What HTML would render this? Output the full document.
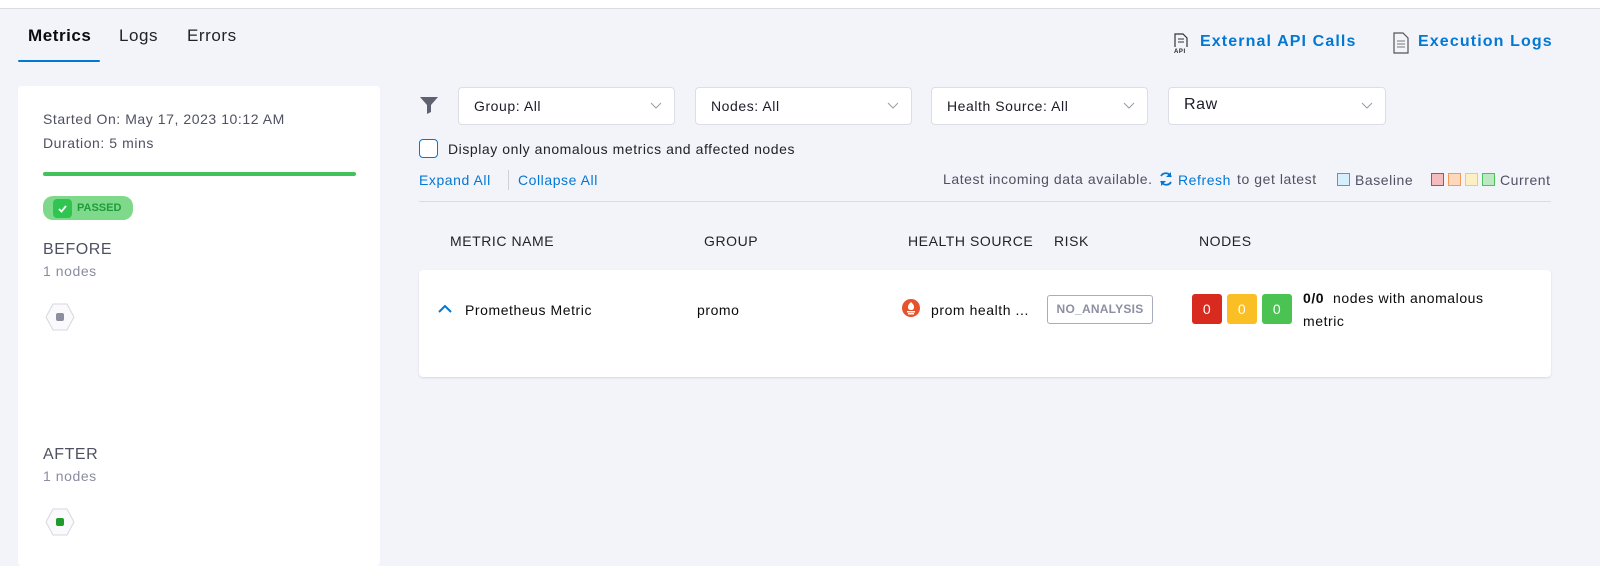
<!DOCTYPE html>
<html><head><meta charset="utf-8"><style>
*{box-sizing:border-box;margin:0;padding:0}
body{width:1600px;height:565px;background:#f3f4f9;font-family:"Liberation Sans",sans-serif;position:relative;overflow:hidden;color:#22222a;letter-spacing:.035em}
.a{position:absolute;white-space:nowrap}
.sel{position:absolute;top:87px;height:38px;background:#fff;border:1px solid #dcdde6;border-radius:4px;font-size:14px;padding:10px 15px;color:#1c1c28}
.sel svg{position:absolute;right:12px;top:14px}
.blue{color:#0278d5}
.hex{position:absolute;width:30px;height:28px}
</style></head><body>
<div class="a" style="left:0;top:0;width:1600px;height:9px;background:#fff;border-bottom:1px solid #dadce6"></div>
<div class="a" style="left:28px;top:26px;font-size:17px;font-weight:bold;color:#0b0b0d">Metrics</div>
<div class="a" style="left:119px;top:26px;font-size:17px;color:#22222a">Logs</div>
<div class="a" style="left:187px;top:26px;font-size:17px;color:#22222a">Errors</div>
<div class="a" style="left:18px;top:60px;width:82px;height:2px;background:#0278d5;border-radius:1px"></div>

<svg class="a" style="left:1173px;top:32px" width="18" height="22" viewBox="0 0 18 22"><path d="M2 15V2h8l4 4v9" fill="none" stroke="#333" stroke-width="1.2"/><path d="M5 7h6M5 10h6" stroke="#333" stroke-width="1"/><text x="1" y="21" font-size="6" font-weight="bold" font-family="Liberation Sans" fill="#222">API</text></svg>
<div class="a blue" style="left:1200px;top:33px;font-size:16px;font-weight:bold;letter-spacing:.07em">External API Calls</div>
<svg class="a" style="left:1392px;top:32px" width="18" height="22" viewBox="0 0 18 22"><path d="M2 1h9l5 5v15H2z" fill="none" stroke="#555" stroke-width="1.2"/><path d="M5 9h8M5 12h8M5 15h8" stroke="#777" stroke-width="1"/></svg>
<div class="a blue" style="left:1418px;top:33px;font-size:16px;font-weight:bold;letter-spacing:.07em">Execution Logs</div>

<div class="a" style="left:18px;top:86px;width:362px;height:480px;background:#fff;border-radius:4px"></div>
<div class="a" style="left:43px;top:111px;font-size:14px;color:#4f5162">Started On: May 17, 2023 10:12 AM</div>
<div class="a" style="left:43px;top:135px;font-size:14px;color:#4f5162">Duration: 5 mins</div>
<div class="a" style="left:43px;top:172px;width:313px;height:4px;background:#42c25a;border-radius:2px"></div>
<div class="a" style="left:43px;top:196px;width:90px;height:24px;background:#7ed98a;border-radius:10px"></div>
<div class="a" style="left:53px;top:199px;width:19px;height:19px;background:#30c550;border-radius:4px"></div>
<svg class="a" style="left:57px;top:203px" width="11" height="11"><path d="M2 6l2.5 2.5L9 3" stroke="#fff" stroke-width="1.8" fill="none"/></svg>
<div class="a" style="left:77px;top:202px;font-size:11px;font-weight:bold;color:#1f9b3a;letter-spacing:0">PASSED</div>
<div class="a" style="left:43px;top:241px;font-size:16px;color:#4f5162">BEFORE</div>
<div class="a" style="left:43px;top:263px;font-size:14px;color:#8a8ca0">1 nodes</div>
<svg class="hex" style="left:45px;top:303px" width="30" height="28"><polygon points="8,1 22,1 29,14 22,27 8,27 1,14" fill="#fafafc" stroke="#d6d7e0"/><rect x="11" y="10" width="8" height="8" rx="2" fill="#8d8e9e"/></svg>
<div class="a" style="left:43px;top:446px;font-size:16px;color:#4f5162">AFTER</div>
<div class="a" style="left:43px;top:468px;font-size:14px;color:#8a8ca0">1 nodes</div>
<svg class="hex" style="left:45px;top:508px" width="30" height="28"><polygon points="8,1 22,1 29,14 22,27 8,27 1,14" fill="#fafafc" stroke="#d6d7e0"/><rect x="11" y="10" width="8" height="8" rx="2" fill="#1f9b2a"/></svg>

<svg class="a" style="left:419px;top:96px" width="20" height="18"><path d="M1 1h18l-7 8v7l-4 2V9z" fill="#5f6070"/></svg>
<div class="sel" style="left:458px;width:217px">Group: All<svg width="12" height="8"><path d="M1 1l5 5 5-5" stroke="#9a9caa" fill="none"/></svg></div>
<div class="sel" style="left:695px;width:217px">Nodes: All<svg width="12" height="8"><path d="M1 1l5 5 5-5" stroke="#9a9caa" fill="none"/></svg></div>
<div class="sel" style="left:931px;width:217px">Health Source: All<svg width="12" height="8"><path d="M1 1l5 5 5-5" stroke="#9a9caa" fill="none"/></svg></div>
<div class="sel" style="left:1168px;width:218px;font-size:16px;padding-top:8px">Raw<svg width="12" height="8"><path d="M1 1l5 5 5-5" stroke="#9a9caa" fill="none"/></svg></div>

<div class="a" style="left:419px;top:139px;width:19px;height:19px;border:1.5px solid #0278d5;border-radius:4px;background:#fff"></div>
<div class="a" style="left:448px;top:141px;font-size:14px;color:#22222a">Display only anomalous metrics and affected nodes</div>
<div class="a blue" style="left:419px;top:172px;font-size:14px">Expand All</div>
<div class="a" style="left:508px;top:170px;width:1px;height:20px;background:#cfd0da"></div>
<div class="a blue" style="left:518px;top:172px;font-size:14px">Collapse All</div>

<div class="a" style="left:943px;top:171px;font-size:14px;color:#4f5162">Latest incoming data available.</div>
<svg class="a" style="left:1158px;top:171px" width="16" height="16" viewBox="0 0 16 16"><path d="M13 6A5.5 5.5 0 0 0 3 5M3 10a5.5 5.5 0 0 0 10 1" stroke="#0278d5" stroke-width="1.8" fill="none"/><path d="M13 1v5H8z M3 15v-5h5z" fill="#0278d5"/></svg>
<div class="a blue" style="left:1178px;top:172px;font-size:14px">Refresh</div>
<div class="a" style="left:1237px;top:171px;font-size:14px;color:#4f5162">to get latest</div>
<div class="a" style="left:1337px;top:173px;width:13px;height:13px;border:1.5px solid #3aa0e8;background:#d6effc"></div>
<div class="a" style="left:1355px;top:172px;font-size:14px;color:#4f5162">Baseline</div>
<div class="a" style="left:1431px;top:173px;width:13px;height:13px;border:1.5px solid #e03a3a;background:#f4bcbc"></div>
<div class="a" style="left:1448px;top:173px;width:13px;height:13px;border:1.5px solid #f39a50;background:#fdd8bc"></div>
<div class="a" style="left:1465px;top:173px;width:13px;height:13px;border:1.5px solid #f6cf4a;background:#fdf1c4"></div>
<div class="a" style="left:1482px;top:173px;width:13px;height:13px;border:1.5px solid #4cc35a;background:#bde9c2"></div>
<div class="a" style="left:1500px;top:172px;font-size:14px;color:#4f5162">Current</div>
<div class="a" style="left:419px;top:201px;width:1132px;height:1px;background:#d9dae3"></div>

<div class="a" style="left:450px;top:233px;font-size:14px;color:#22222a">METRIC NAME</div>
<div class="a" style="left:704px;top:233px;font-size:14px;color:#22222a">GROUP</div>
<div class="a" style="left:908px;top:233px;font-size:14px;color:#22222a">HEALTH SOURCE</div>
<div class="a" style="left:1054px;top:233px;font-size:14px;color:#22222a">RISK</div>
<div class="a" style="left:1199px;top:233px;font-size:14px;color:#22222a">NODES</div>

<div class="a" style="left:419px;top:270px;width:1132px;height:107px;background:#fff;border-radius:4px;box-shadow:0 1px 2px rgba(0,0,0,.12)"></div>
<svg class="a" style="left:437px;top:304px" width="16" height="10"><path d="M2 8l6-6 6 6" stroke="#0278d5" stroke-width="2" fill="none"/></svg>
<div class="a" style="left:465px;top:302px;font-size:14px;color:#0b0b0d">Prometheus Metric</div>
<div class="a" style="left:697px;top:302px;font-size:14px;color:#0b0b0d">promo</div>
<svg class="a" style="left:902px;top:299px" width="18" height="18"><circle cx="9" cy="9" r="9" fill="#e6522c"/><path d="M9 3c2 2 3 3 3 5s-1 3-3 3-3-1-3-3 1-3 3-5z" fill="#fff"/><rect x="5" y="12" width="8" height="1.5" fill="#fff"/><rect x="6" y="14" width="6" height="1.5" fill="#fff"/></svg>
<div class="a" style="left:931px;top:302px;font-size:14px;color:#0b0b0d">prom health ...</div>
<div class="a" style="left:1047px;top:295px;width:106px;height:29px;border:1.5px solid #a9abbe;border-radius:3px;font-size:12px;font-weight:bold;color:#8d8fa3;text-align:center;line-height:26px;letter-spacing:.02em">NO_ANALYSIS</div>
<div class="a" style="left:1192px;top:294px;width:30px;height:30px;background:#d92a1f;border-radius:3px;color:#fff;font-size:14px;text-align:center;line-height:30px">0</div>
<div class="a" style="left:1227px;top:294px;width:30px;height:30px;background:#fbbf26;border-radius:3px;color:#fff;font-size:14px;text-align:center;line-height:30px">0</div>
<div class="a" style="left:1262px;top:294px;width:30px;height:30px;background:#4ac353;border-radius:3px;color:#fff;font-size:14px;text-align:center;line-height:30px">0</div>
<div class="a" style="left:1303px;top:290px;font-size:14px;color:#0b0b0d"><b>0/0</b>&nbsp; nodes with anomalous</div>
<div class="a" style="left:1303px;top:313px;font-size:14px;color:#0b0b0d">metric</div>
</body></html>
